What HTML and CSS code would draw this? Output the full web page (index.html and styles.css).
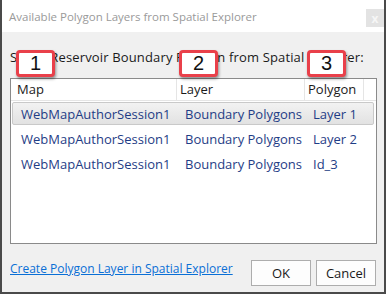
FILE: index.html
```html
<!DOCTYPE html>
<html lang="en">
<head>
    <meta charset="UTF-8">
    <title>Available Polygon Layers from Spatial Explorer</title>
    <link rel="stylesheet" href="styles.css">
</head>
<body>
    <div class="window">
        <div class="titlebar">
            <span class="title">Available Polygon Layers from Spatial Explorer</span>
            <span class="close">x</span>
        </div>
        <div class="content">
            <div class="prompt">Select Reservoir Boundary Polygon from Spatial Explorer:</div>
            <div class="listview">
                <div class="row header">
                    <div class="cell">Map</div>
                    <div class="cell">Layer</div>
                    <div class="cell">Polygon</div>
                    <div class="cell"></div>
                </div>
                <div class="rows">
                    <div class="row item selected">
                        <div class="cell">WebMapAuthorSession1</div>
                        <div class="cell">Boundary Polygons</div>
                        <div class="cell">Layer 1</div>
                    </div>
                    <div class="row item">
                        <div class="cell">WebMapAuthorSession1</div>
                        <div class="cell">Boundary Polygons</div>
                        <div class="cell">Layer 2</div>
                    </div>
                    <div class="row item">
                        <div class="cell">WebMapAuthorSession1</div>
                        <div class="cell">Boundary Polygons</div>
                        <div class="cell">Id_3</div>
                    </div>
                </div>
            </div>
            <div class="footer">
                <a class="link" href="#">Create Polygon Layer in Spatial Explorer</a>
                <div class="buttons">
                    <button>OK</button>
                    <button>Cancel</button>
                </div>
            </div>
            <span class="badge b1">1</span>
            <span class="badge b2">2</span>
            <span class="badge b3">3</span>
        </div>
    </div>
</body>
</html>
```

FILE: styles.css
```css
body {
    margin: 0;
    font-family: 'Open Sans', 'Noto Sans', sans-serif;
    font-size: 13px;
}
.window {
    width: 382px;
    height: 292px;
    border: 2px solid #4a4a4a;
    border-top: none;
    background: #f0f0f0;
    display: flex;
    flex-direction: column;
}
.titlebar {
    height: 32px;
    background: white;
    display: flex;
    align-items: center;
    padding-left: 7px;
}
.title {
    color: #9a9a9a;
    font-size: 11.5px;
}
.close {
    margin-left: auto;
    width: 18px;
    height: 18px;
    margin-top: 4px;
    background: #e3e3e3;
    color: #f6f6f6;
    font-size: 12px;
    font-weight: bold;
    display: flex;
    align-items: center;
    justify-content: center;
}
.content {
    position: relative;
    flex: 1;
    padding: 0 8px;
    display: flex;
    flex-direction: column;
}
.prompt {
    margin-top: 16px;
    color: #1a1a1a;
    line-height: 18px;
    letter-spacing: 0.15px;
}
.listview {
    margin-top: 12px;
    height: 164px;
    border: 1px solid #8a8a8a;
    background: white;
    width: 365px;
}
.row {
    display: grid;
    grid-template-columns: 166px 128px 59px 1fr;
    align-items: center;
}
.header {
    height: 21px;
    border-bottom: 1px solid #e5e5e5;
    color: #1a1a1a;
}
.header .cell {
    border-right: 1px solid #e5e5e5;
    height: 21px;
    line-height: 21px;
    padding-left: 3px;
}
.header .cell:first-child {
    padding-left: 6px;
}
.header .cell:last-child {
    border-right: none;
}
.rows {
    padding: 1px 2px 0 1px;
}
.item {
    height: 21px;
    margin-bottom: 2px;
    color: #1f3d86;
    border: 1px solid transparent;
    border-radius: 2px;
    grid-template-columns: 165px 128px 1fr;
}
.item .cell {
    padding-left: 7px;
    white-space: nowrap;
}
.item .cell:first-child {
    padding-left: 8px;
}
.selected {
    background: linear-gradient(#f2f2f2, #e2e2e2);
    border-color: #c9c9c9;
}
.footer {
    margin-top: 11px;
    display: flex;
    align-items: flex-start;
}
.link {
    color: #0a6fd6;
    text-decoration: underline;
    font-size: 12px;
    line-height: 16px;
    white-space: nowrap;
    margin-top: 6px;
}
.buttons {
    margin-left: auto;
    display: flex;
    gap: 5px;
    margin-top: 5px;
}
button {
    width: 60px;
    height: 26px;
    background: #fdfdfd;
    border: 1px solid #adadad;
    font-family: 'Open Sans', 'Noto Sans', sans-serif;
    font-size: 13px;
    color: #1a1a1a;
    padding: 0;
}
.badge {
    position: absolute;
    top: 18px;
    width: 33px;
    height: 21px;
    background: white;
    border: 3px solid #e9404a;
    border-radius: 4px;
    box-shadow: 1px 2px 3px rgba(0, 0, 0, 0.4);
    font-family: 'Liberation Sans', sans-serif;
    font-size: 20px;
    line-height: 21px;
    text-align: center;
    color: #111;
}
.b1 { left: 14px; }
.b2 { left: 177px; }
.b3 { left: 305px; }
```
